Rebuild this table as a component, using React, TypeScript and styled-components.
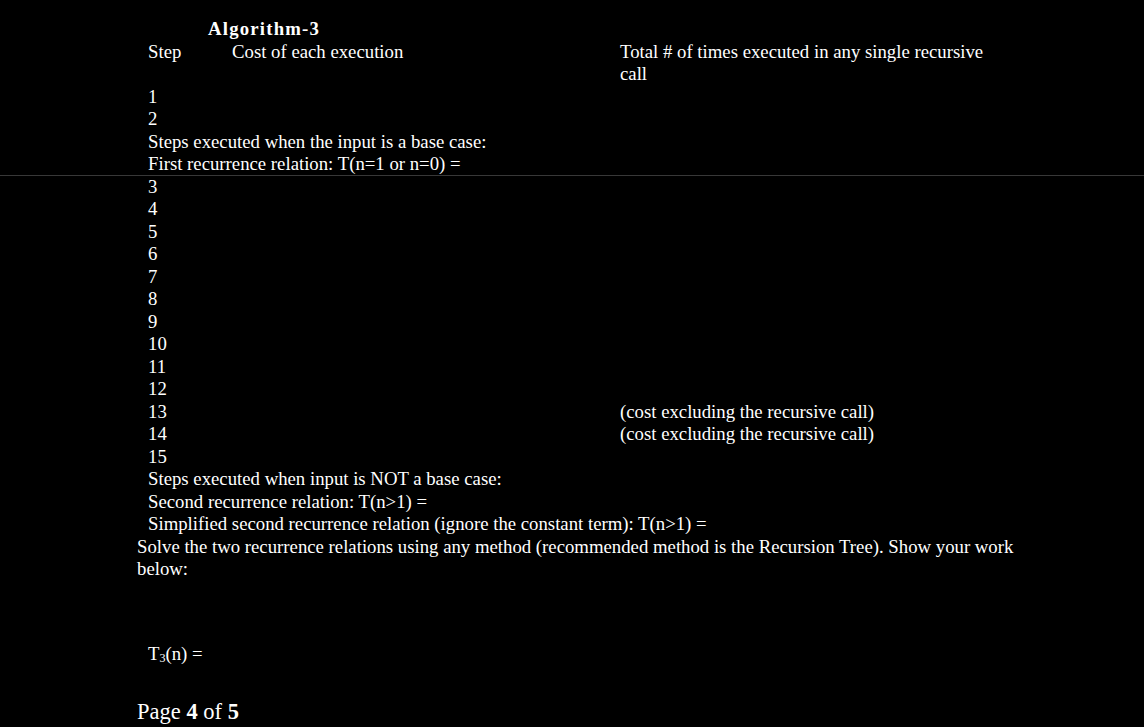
import React from 'react';
import styled, { createGlobalStyle } from 'styled-components';

const GlobalStyle = createGlobalStyle`
  html, body {
    margin: 0;
    padding: 0;
    background: #000;
  }
  body {
    color: #fff;
    font-family: "Liberation Serif", "Times New Roman", serif;
    font-size: 18.75px;
  }
`;

const Page = styled.div`
  display: flex;
  flex-direction: column;
  width: 1144px;
  min-height: 727px;
  padding-top: 18px;
  box-sizing: border-box;
  overflow: hidden;
`;

const Section = styled.div<{ $divided?: boolean }>`
  display: flex;
  flex-direction: column;
  border-top: ${(p) => (p.$divided ? '1px solid #383838' : 'none')};
  margin-top: ${(p) => (p.$divided ? '-1px' : '0')};
`;

const Title = styled.div`
  padding-left: 208px;
  font-weight: bold;
  letter-spacing: 1.2px;
  line-height: 22.5px;
`;

const Row = styled.div`
  display: grid;
  grid-template-columns: 84px 388px 372px;
  padding-left: 148px;
  line-height: 22.5px;
`;

const Line = styled.div`
  padding-left: 148px;
  line-height: 22.5px;
`;

const Paragraph = styled.div`
  padding-left: 137px;
  width: 890px;
  line-height: 22.5px;
`;

const Answer = styled.div`
  padding-left: 148px;
  margin-top: 62px;
  line-height: 22.5px;
`;

const Sub = styled.sub`
  font-size: 12px;
  vertical-align: -2px;
`;

const Footer = styled.div`
  padding-left: 137px;
  margin-top: 31px;
  font-size: 22.5px;
  line-height: 24px;
`;

const steps1 = ['1', '2'];
const steps2 = ['3', '4', '5', '6', '7', '8', '9', '10', '11', '12', '13', '14', '15'];
const excluded = ['13', '14'];

export default function App() {
  return (
    <>
      <GlobalStyle />
      <Page>
        <Section>
          <Title>Algorithm-3</Title>
          <Row>
            <span>Step</span>
            <span>Cost of each execution</span>
            <span>Total # of times executed in any single recursive call</span>
          </Row>
          {steps1.map((s) => (
            <Row key={s}>
              <span>{s}</span>
            </Row>
          ))}
          <Line>Steps executed when the input is a base case:</Line>
          <Line>First recurrence relation: T(n=1 or n=0) =</Line>
        </Section>
        <Section $divided>
          {steps2.map((s) => (
            <Row key={s}>
              <span>{s}</span>
              <span />
              <span>{excluded.includes(s) ? '(cost excluding the recursive call)' : ''}</span>
            </Row>
          ))}
          <Line>Steps executed when input is NOT a base case:</Line>
          <Line>Second recurrence relation: T(n&gt;1) =</Line>
          <Line>Simplified second recurrence relation (ignore the constant term): T(n&gt;1) =</Line>
          <Paragraph>
            Solve the two recurrence relations using any method (recommended method is the Recursion Tree). Show your
            work below:
          </Paragraph>
          <Answer>
            T<Sub>3</Sub>(n) =
          </Answer>
          <Footer>
            Page <b>4</b> of <b>5</b>
          </Footer>
        </Section>
      </Page>
    </>
  );
}
